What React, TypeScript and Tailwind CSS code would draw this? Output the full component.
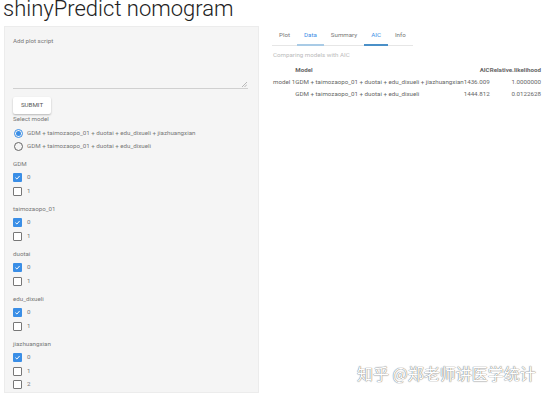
import React from "react";

const groups: { name: string; options: string[] }[] = [
  { name: "GDM", options: ["0", "1"] },
  { name: "taimozaopo_01", options: ["0", "1"] },
  { name: "duotai", options: ["0", "1"] },
  { name: "edu_dixueli", options: ["0", "1"] },
  { name: "jiazhuangxian", options: ["0", "1", "2"] },
];

const models = [
  "GDM + taimozaopo_01 + duotai + edu_dixueli + jiazhuangxian",
  "GDM + taimozaopo_01 + duotai + edu_dixueli",
];

function Checkbox({ checked, label }: { checked: boolean; label: string }) {
  return (
    <div className="flex items-center gap-[5px] h-[13.5px]">
      {checked ? (
        <span className="w-[9px] h-[9px] rounded-[1px] bg-[#3a8ee6] flex items-center justify-center">
          <svg viewBox="0 0 10 10" className="w-[7px] h-[7px]">
            <path d="M2 5.2 L4.2 7.2 L8 2.8" fill="none" stroke="white" strokeWidth="1.4" />
          </svg>
        </span>
      ) : (
        <span className="w-[9px] h-[9px] rounded-[1px] border border-[#777] bg-white" />
      )}
      <span className="text-[#777]">{label}</span>
    </div>
  );
}

function Radio({ checked, label }: { checked: boolean; label: string }) {
  return (
    <div className="flex items-center gap-[4px] h-[13px]">
      {checked ? (
        <span className="w-[9px] h-[9px] rounded-full border border-[#3a8ee6] flex items-center justify-center">
          <span className="w-[5px] h-[5px] rounded-full bg-[#3a8ee6]" />
        </span>
      ) : (
        <span className="w-[9px] h-[9px] rounded-full border border-[#666]" />
      )}
      <span>{label}</span>
    </div>
  );
}

export default function App() {
  return (
    <div
      className="relative w-[554px] h-[397px] bg-white overflow-hidden text-[6.2px] text-[#777]"
      style={{ fontFamily: "Roboto, 'Noto Sans', sans-serif" }}
    >
      <h1 className="text-[22px] leading-[24px] font-light text-[#222] pl-[3px] -mt-[3px]">
        shinyPredict nomogram
      </h1>

      <div className="flex gap-[13px] mt-[5px]">
        {/* sidebar */}
        <div className="shrink-0 ml-[4px] w-[255px] h-[367px] bg-[#f5f5f5] border border-[#ececec] px-[8px] pt-[10px]">
          <div className="leading-[9px]">Add plot script</div>
          <div className="relative h-[43px] border-b border-[#d0d0d0] mr-[2px]">
            <svg viewBox="0 0 6 6" className="absolute right-[1px] bottom-[1px] w-[5px] h-[5px]">
              <path d="M0 6 L6 0 M3 6 L6 3" stroke="#999" strokeWidth="0.8" />
            </svg>
          </div>
          <button className="mt-[8px] h-[17px] w-[38px] bg-white text-[#555] font-normal text-[6.2px] shadow-[0_1px_2px_rgba(0,0,0,0.25)] rounded-[2px]">
            SUBMIT
          </button>
          <div className="leading-[9px] mt-[1px]">Select model</div>
          <div className="mt-[3px] mb-[1px] ml-[1px]">
            {models.map((m, i) => (
              <Radio key={m} checked={i === 0} label={m} />
            ))}
          </div>
          {groups.map((g) => (
            <div key={g.name} className="mt-[5px]">
              <div className="leading-[9px] h-[12px] flex items-center">{g.name}</div>
              <div className="mt-[1px]">
                {g.options.map((o, i) => (
                  <Checkbox key={o} checked={i === 0} label={o} />
                ))}
              </div>
            </div>
          ))}
        </div>

        {/* main */}
        <div className="flex-1 min-w-0">
          <div className="flex w-fit border-b border-[#e6e6e6] h-[20px] items-center">
            {["Plot", "Data", "Summary", "AIC", "Info"].map((t) => (
              <div
                key={t}
                className={`relative h-full flex items-center px-[7px] ${
                  t === "Data" || t === "AIC" ? "text-[#3a8ee6]" : "text-[#777]"
                }`}
              >
                {t}
                {t === "AIC" && <span className="absolute left-0 right-0 bottom-[-1px] h-[2px] bg-[#4a90c8]" />}
                {t === "Data" && <span className="absolute left-0 right-0 bottom-[-1px] h-[2px] bg-[#a9cbe6]" />}
              </div>
            ))}
          </div>
          <div className="mt-[5px] text-[#bbb] pl-[1px]">Comparing models with AIC</div>
          <table className="mt-[5px] border-collapse text-[#666]">
            <thead>
              <tr className="h-[11px]">
                <th />
                <th className="text-left font-bold">Model</th>
                <th className="text-right font-bold">AIC</th>
                <th className="text-right font-bold">Relative.likelihood</th>
              </tr>
            </thead>
            <tbody>
              <tr className="h-[12px]">
                <td className="whitespace-nowrap pl-[1px]">model 1</td>
                <td className="whitespace-nowrap">{models[0]}</td>
                <td className="text-right">1436.009</td>
                <td className="text-right">1.0000000</td>
              </tr>
              <tr className="h-[12px]">
                <td />
                <td className="whitespace-nowrap">{models[1]}</td>
                <td className="text-right">1444.812</td>
                <td className="text-right">0.0122628</td>
              </tr>
            </tbody>
          </table>
        </div>
      </div>

      <div
        className="absolute left-[357px] top-[362px] text-[16px] leading-[22px] text-white"
        style={{
          fontFamily: "'Noto Sans CJK SC', sans-serif",
          textShadow: "0 0 1px #777, 0 0 1px #777",
        }}
      >
        知乎 @郑老师讲医学统计
      </div>
    </div>
  );
}
